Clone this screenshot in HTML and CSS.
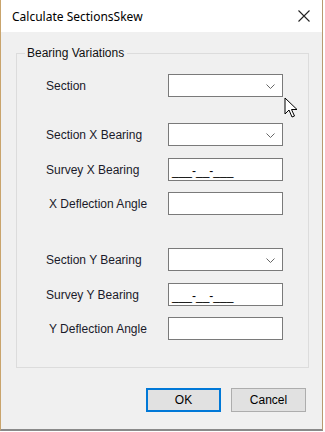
FILE: index.html
```html
<!DOCTYPE html>
<html>
<head>
<meta charset="utf-8">
<link rel="stylesheet" href="styles.css">
</head>
<body>
<div class="window">
  <div class="titlebar">
    <span class="title">Calculate SectionsSkew</span>
    <svg class="close" width="12" height="12" viewBox="0 0 12 12"><path d="M0.5 0.5L11.5 11.5M11.5 0.5L0.5 11.5" stroke="#222" stroke-width="1.1"/></svg>
  </div>
  <div class="client">
    <fieldset class="group">
      <legend>Bearing Variations</legend>
      <div class="row first">
        <span class="label">Section</span>
        <div class="field combo"><svg width="9" height="5" viewBox="0 0 9 5"><path d="M0.5 0.5L4.5 4.5L8.5 0.5" fill="none" stroke="#666" stroke-width="1"/></svg></div>
      </div>
      <div class="row gap-md">
        <span class="label">Section X Bearing</span>
        <div class="field combo"><svg width="9" height="5" viewBox="0 0 9 5"><path d="M0.5 0.5L4.5 4.5L8.5 0.5" fill="none" stroke="#666" stroke-width="1"/></svg></div>
      </div>
      <div class="row survey">
        <span class="label">Survey X Bearing</span>
        <div class="field mask">___-__-___</div>
      </div>
      <div class="row">
        <span class="label indent">X Deflection Angle</span>
        <div class="field"></div>
      </div>
      <div class="row gap-lg">
        <span class="label">Section Y Bearing</span>
        <div class="field combo"><svg width="9" height="5" viewBox="0 0 9 5"><path d="M0.5 0.5L4.5 4.5L8.5 0.5" fill="none" stroke="#666" stroke-width="1"/></svg></div>
      </div>
      <div class="row survey">
        <span class="label">Survey Y Bearing</span>
        <div class="field mask">___-__-___</div>
      </div>
      <div class="row">
        <span class="label indent">Y Deflection Angle</span>
        <div class="field"></div>
      </div>
    </fieldset>
    <div class="buttons">
      <button class="btn default">OK</button>
      <button class="btn">Cancel</button>
    </div>
  </div>
  <svg class="cursor" width="14" height="22" viewBox="0 0 14 22"><path d="M1 1L1 17L5 13L8 20L10.5 19L7.5 12.5L13 12.5Z" fill="#fff" stroke="#000" stroke-width="1" stroke-linejoin="round"/></svg>
</div>
</body>
</html>
```
FILE: styles.css
```css
html, body {
  margin: 0;
  padding: 0;
  background: #ffffff;
}
.window {
  position: relative;
  width: 321px;
  height: 429px;
  border-left: 1px solid #c9a46c;
  border-right: 1px solid #b89a70;
  border-bottom: 2px solid #8a8a8a;
  display: flex;
  flex-direction: column;
  font-family: "Liberation Sans", Arial, sans-serif;
  font-size: 12px;
  color: #000;
  overflow: hidden;
}
.titlebar {
  height: 32px;
  flex: none;
  background: #fff;
  display: flex;
  align-items: center;
  justify-content: space-between;
  padding: 0 12px 0 11px;
}
.title {
  font-family: "Noto Sans", "Open Sans", sans-serif;
  font-size: 12px;
  color: #000;
}
.client {
  flex: 1;
  background: #f0f0f0;
  padding: 14px 13px 0 15px;
  display: flex;
  flex-direction: column;
}
.group {
  margin: 0;
  border: 1px solid #dcdcdc;
  padding: 0 0 27px 29px;
  min-width: 0;
}
.group legend {
  padding: 0 3px 0 2px;
  margin-left: -21px;
  font-size: 12px;
  color: #111;
  line-height: 14px;
}
.row {
  display: flex;
  align-items: center;
  height: 23px;
  margin-top: 11px;
}
.row.survey {
  margin-top: 12px;
}
.row.first {
  margin-top: 14px;
}
.row.gap-md {
  margin-top: 26px;
}
.row.gap-lg {
  margin-top: 33px;
}
.label {
  width: 122px;
  flex: none;
  color: #1a1a2a;
}
.label.indent {
  padding-left: 3px;
  width: 119px;
}
.field {
  width: 113px;
  height: 21px;
  border: 1px solid #7a7a7a;
  background: #fff;
  display: flex;
  align-items: center;
  box-sizing: content-box;
}
.combo {
  justify-content: flex-end;
}
.combo svg {
  margin-right: 7px;
  margin-top: 1px;
}
.mask {
  padding-left: 3px;
  width: 110px;
  font-size: 12px;
  color: #000;
  padding-top: 2px;
  height: 19px;
}
.buttons {
  display: flex;
  justify-content: flex-end;
  gap: 10px;
  margin-top: 20px;
  padding-right: 3px;
}
.btn {
  width: 75px;
  height: 24px;
  margin: 0;
  padding: 0;
  background: #e1e1e1;
  border: 1px solid #adadad;
  font-family: "Liberation Sans", Arial, sans-serif;
  font-size: 12px;
  color: #000;
  box-sizing: border-box;
}
.btn.default {
  border: 2px solid #0078d7;
}
.cursor {
  position: absolute;
  left: 283px;
  top: 97px;
}
```
